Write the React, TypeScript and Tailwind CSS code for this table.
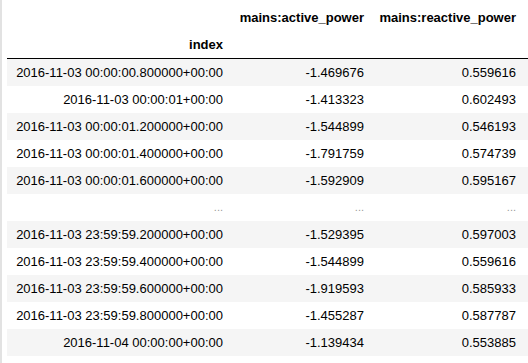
const ROWS: [string, string, string][] = [
  ["2016-11-03 00:00:00.800000+00:00", "-1.469676", "0.559616"],
  ["2016-11-03 00:00:01+00:00", "-1.413323", "0.602493"],
  ["2016-11-03 00:00:01.200000+00:00", "-1.544899", "0.546193"],
  ["2016-11-03 00:00:01.400000+00:00", "-1.791759", "0.574739"],
  ["2016-11-03 00:00:01.600000+00:00", "-1.592909", "0.595167"],
  ["...", "...", "..."],
  ["2016-11-03 23:59:59.200000+00:00", "-1.529395", "0.597003"],
  ["2016-11-03 23:59:59.400000+00:00", "-1.544899", "0.559616"],
  ["2016-11-03 23:59:59.600000+00:00", "-1.919593", "0.585933"],
  ["2016-11-03 23:59:59.800000+00:00", "-1.455287", "0.587787"],
  ["2016-11-04 00:00:00+00:00", "-1.139434", "0.553885"],
];

function Row({ cells, striped, head }: { cells: string[]; striped?: boolean; head?: boolean }) {
  const dots = cells[0] === "...";
  return (
    <div
      className={`flex h-[27px] items-center text-right ${striped ? "bg-[#f5f5f5]" : ""} ${
        head ? "font-bold" : ""
      } ${dots ? "text-[#9a9a9a] text-[11px]" : ""}`}
    >
      <div className="w-[224px] shrink-0 pr-[8px]">{cells[0]}</div>
      <div className="w-[139px] shrink-0 pr-[6px]">{cells[1]}</div>
      <div className="w-[158px] shrink-0 pr-[12px]">{cells[2]}</div>
    </div>
  );
}

export default function App() {
  return (
    <div className="flex h-[363px] w-[528px] overflow-hidden bg-white font-['Liberation_Sans',Arial,sans-serif] text-[13px] text-black">
      <div className="h-full w-[2px] shrink-0 bg-[#e2e2e2]" />
      <div className="ml-[5px] w-[521px] shrink-0 pt-[4px]">
        <Row head cells={["", "mains:active_power", "mains:reactive_power"]} />
        <div className="border-b border-black">
          <Row head cells={["index", "", ""]} />
        </div>
        {ROWS.map((r, i) => (
          <Row key={i} cells={r} striped={i % 2 === 0} />
        ))}
      </div>
    </div>
  );
}
